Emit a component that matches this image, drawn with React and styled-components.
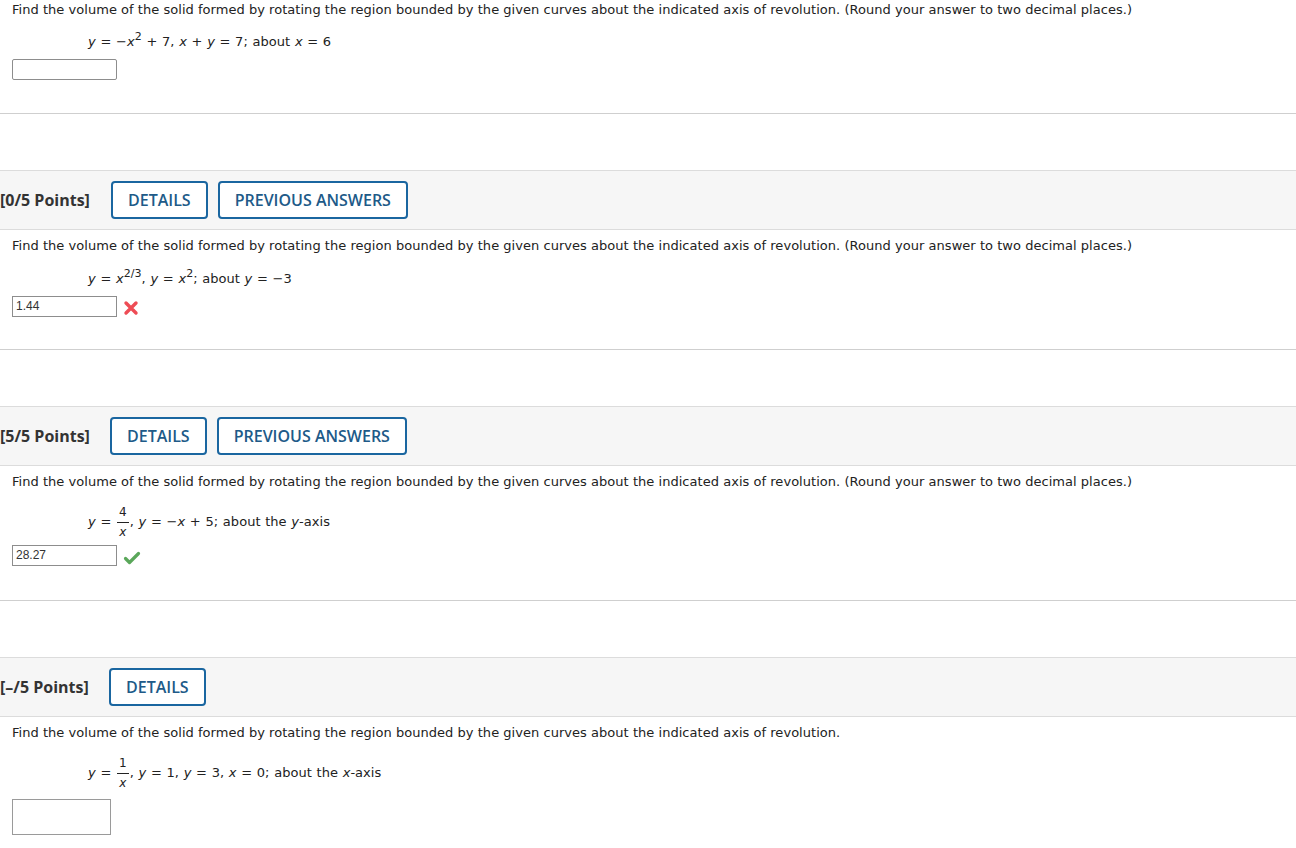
import styled, { createGlobalStyle } from "styled-components";

const GlobalStyle = createGlobalStyle`
  body {
    margin: 0;
    background: #fff;
    font-family: "DejaVu Sans", Verdana, sans-serif;
    color: #222;
  }
`;

const Page = styled.div`
  width: 1296px;
  overflow: hidden;
`;

const Question = styled.section`
  border-bottom: ${(p) => (p.$last ? "none" : "1px solid #cfcfcf")};
  padding-bottom: ${(p) => p.$pad}px;
  margin-bottom: ${(p) => (p.$last ? 0 : 56)}px;
`;

const Header = styled.div`
  display: flex;
  align-items: center;
  gap: 10px;
  background: #f6f6f6;
  border-top: 1px solid #dcdcdc;
  border-bottom: 1px solid #dcdcdc;
  padding: 10px 0;
  font-family: "Open Sans", sans-serif;
`;

const Points = styled.span`
  font-size: 16px;
  font-weight: 700;
  color: #333;
  width: ${(p) => p.$w}px;
`;

const Button = styled.button`
  height: 38px;
  padding: 0 15px;
  background: #fff;
  border: 2px solid #1a66a0;
  border-radius: 4px;
  font-family: "Open Sans", sans-serif;
  font-size: 16px;
  font-weight: 600;
  color: #205a88;
  text-transform: uppercase;
  cursor: pointer;
`;

const Body = styled.div`
  padding: ${(p) => p.$top}px 12px 0;
  letter-spacing: 0.035px;
`;

const Prompt = styled.p`
  margin: 0;
  font-size: 13px;
  line-height: 16px;
`;

const Equation = styled.div`
  margin-top: ${(p) => p.$mt}px;
  padding-left: 76px;
  font-size: 13px;
  line-height: 18px;
  white-space: pre;
  word-spacing: 0.5px;
  sup {
    font-size: 11px;
    line-height: 0;
    vertical-align: 6px;
  }
`;

const V = styled.i`
  font-style: italic;
`;

const Frac = styled.span`
  display: inline-flex;
  flex-direction: column;
  align-items: center;
  vertical-align: middle;
  margin: 0 1px;
  font-size: 12px;
  line-height: 17px;
  span:first-child {
    border-bottom: 1px solid #222;
    padding: 0 2px 1px;
  }
  i {
    padding-top: 1px;
  }
`;

const AnswerRow = styled.div`
  margin-top: ${(p) => p.$mt}px;
  display: flex;
  align-items: center;
  gap: 6px;
`;

const Input = styled.div`
  box-sizing: border-box;
  width: ${(p) => p.$w}px;
  height: ${(p) => p.$h}px;
  border: 1px solid ${(p) => p.$border};
  border-radius: ${(p) => (p.$round ? 2 : 0)}px;
  font-family: "Liberation Sans", Arial, sans-serif;
  font-size: 12px;
  letter-spacing: 0;
  line-height: ${(p) => p.$h - 2}px;
  padding-left: 3px;
  color: #333;
  background: #fff;
`;

const Cross = () => (
  <svg width="16" height="16" viewBox="0 0 16 16" style={{ marginTop: 3 }}>
    <path d="M3 3 L13 13 M13 3 L3 13" stroke="#ee4c55" strokeWidth="3.4" strokeLinecap="round" />
  </svg>
);

const Check = () => (
  <svg width="18" height="16" viewBox="0 0 18 16" style={{ marginTop: 4 }}>
    <path d="M2.5 8.5 L6.5 12.5 L15.5 3.5" fill="none" stroke="#5aa75a" strokeWidth="3.2" strokeLinecap="round" strokeLinejoin="round" />
  </svg>
);

const PROMPT =
  "Find the volume of the solid formed by rotating the region bounded by the given curves about the indicated axis of revolution.";

export default function App() {
  return (
    <Page>
      <GlobalStyle />

      <Question $pad={33}>
        <Body $top={2}>
          <Prompt>{PROMPT} (Round your answer to two decimal places.)</Prompt>
          <Equation $mt={15}>
            <V>y</V> = −<V>x</V>
            <sup>2</sup> + 7, <V>x</V> + <V>y</V> = 7; about <V>x</V> = 6
          </Equation>
          <AnswerRow $mt={8}>
            <Input $w={105} $h={21} $border="#8d8d8d" $round />
          </AnswerRow>
        </Body>
      </Question>

      <Question $pad={32}>
        <Header>
          <Points $w={101}>[0/5 Points]</Points>
          <Button>Details</Button>
          <Button>Previous Answers</Button>
        </Header>
        <Body $top={8}>
          <Prompt>{PROMPT} (Round your answer to two decimal places.)</Prompt>
          <Equation $mt={16}>
            <V>y</V> = <V>x</V>
            <sup>2/3</sup>, <V>y</V> = <V>x</V>
            <sup>2</sup>; about <V>y</V> = −3
          </Equation>
          <AnswerRow $mt={8}>
            <Input $w={105} $h={21} $border="#8d8d8d">1.44</Input>
            <Cross />
          </AnswerRow>
        </Body>
      </Question>

      <Question $pad={34}>
        <Header>
          <Points $w={100}>[5/5 Points]</Points>
          <Button>Details</Button>
          <Button>Previous Answers</Button>
        </Header>
        <Body $top={8}>
          <Prompt>{PROMPT} (Round your answer to two decimal places.)</Prompt>
          <Equation $mt={14}>
            <V>y</V> ={" "}
            <Frac>
              <span>4</span>
              <V>x</V>
            </Frac>
            , <V>y</V> = −<V>x</V> + 5; about the <V>y</V>-axis
          </Equation>
          <AnswerRow $mt={4}>
            <Input $w={105} $h={21} $border="#8d8d8d">28.27</Input>
            <Check />
          </AnswerRow>
        </Body>
      </Question>

      <Question $pad={12} $last>
        <Header>
          <Points $w={99}>[–/5 Points]</Points>
          <Button>Details</Button>
        </Header>
        <Body $top={8}>
          <Prompt>{PROMPT}</Prompt>
          <Equation $mt={14}>
            <V>y</V> ={" "}
            <Frac>
              <span>1</span>
              <V>x</V>
            </Frac>
            , <V>y</V> = 1, <V>y</V> = 3, <V>x</V> = 0; about the <V>x</V>-axis
          </Equation>
          <AnswerRow $mt={7}>
            <Input $w={99} $h={36} $border="#9a9a9a" />
          </AnswerRow>
        </Body>
      </Question>
    </Page>
  );
}
